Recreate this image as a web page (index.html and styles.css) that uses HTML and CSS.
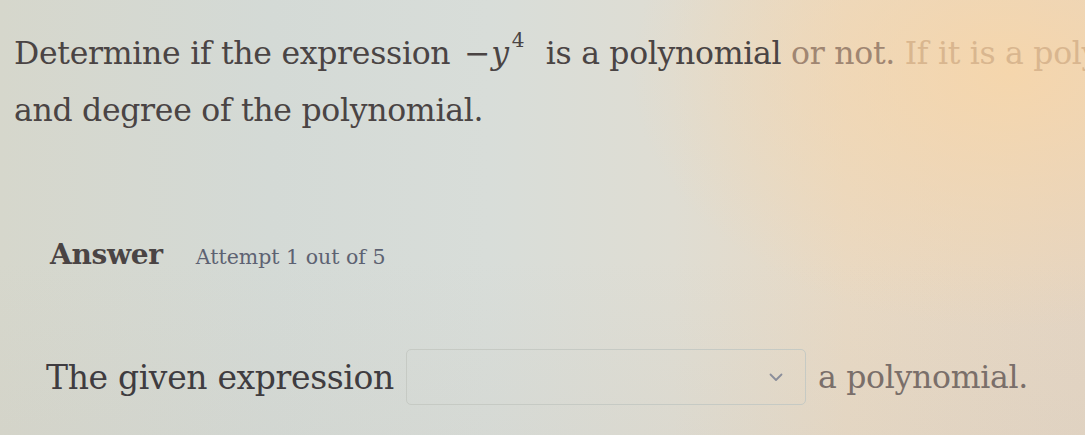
FILE: index.html
```html
<!DOCTYPE html>
<html>
<head>
<meta charset="utf-8">
<link rel="stylesheet" href="styles.css">
</head>
<body>
<div class="screen">
  <div class="glare"></div>
  <div class="page">
    <p class="question"><span class="q-dark">Determine if the expression <span class="math"><span class="minus">−</span><span class="var">y</span><sup class="exp">4</sup></span> is a polynomial</span> <span class="q-mid">or not.</span> <span class="q-light">If it is a polynomial, state the type</span><br><span class="q-dark">and degree of the polynomial.</span></p>
    <div class="answer-head">
      <span class="answer-label">Answer</span>
      <span class="attempt">Attempt 1 out of 5</span>
    </div>
    <div class="answer-row">
      <span class="lead">The given expression</span>
      <div class="select">
        <svg class="chev" width="14" height="9" viewBox="0 0 14 9"><path d="M1.5 1.5 L7 7 L12.5 1.5" fill="none" stroke="#8a8d9a" stroke-width="1.8" stroke-linecap="round" stroke-linejoin="round"/></svg>
      </div>
      <span class="tail">a polynomial.</span>
    </div>
  </div>
</div>
</body>
</html>
```
FILE: styles.css
```css
html, body {
  margin: 0;
  padding: 0;
  width: 1085px;
  height: 435px;
  overflow: hidden;
}
.screen {
  position: relative;
  width: 1085px;
  height: 435px;
  overflow: hidden;
  background:
    radial-gradient(ellipse 380px 260px at 1010px 70px, rgba(247, 214, 170, 0.9), rgba(240, 214, 180, 0) 100%),
    linear-gradient(90deg, #d6d7cc 0%, #d4dad6 25%, #d8ddd9 45%, #dfddd3 62%, #e8d9c4 78%, #e4d5c3 100%);
  font-family: "DejaVu Serif", Georgia, serif;
}
.glare {
  position: absolute;
  inset: 0;
  background: linear-gradient(180deg, rgba(255,255,255,0) 60%, rgba(200, 195, 185, 0.15) 100%);
  pointer-events: none;
}
.page {
  position: relative;
  padding-left: 14px;
}
.question {
  margin: 0;
  padding-top: 27px;
  font-size: 31.5px;
  line-height: 53px;
  white-space: nowrap;
  letter-spacing: -0.3px;
}
.q-dark { color: #4a4444; }
.q-mid { color: #a08672; }
.q-light { color: #d9b68f; }
.math { padding: 0 12px 0 4px; }
.minus { margin-right: 1px; }
.var { font-style: italic; }
.exp {
  font-size: 20px;
  vertical-align: 0;
  position: relative;
  top: -17px;
  margin-left: 3px;
}
.answer-head {
  display: flex;
  align-items: baseline;
  gap: 33px;
  padding-left: 36px;
  margin-top: 101px;
}
.answer-label {
  font-weight: bold;
  font-size: 28px;
  color: #4a4444;
  letter-spacing: -0.3px;
}
.attempt {
  font-size: 20.5px;
  color: #5d6272;
}
.answer-row {
  display: flex;
  align-items: center;
  padding-left: 32px;
  margin-top: 78px;
}
.lead {
  font-size: 33px;
  color: #3f3c40;
  letter-spacing: -0.35px;
}
.select {
  margin-left: 12px;
  width: 400px;
  height: 56px;
  border: 1px solid #c6cac4;
  border-radius: 5px;
  display: flex;
  align-items: center;
  justify-content: flex-end;
  padding-right: 22px;
  box-sizing: border-box;
}
.tail {
  margin-left: 12px;
  font-size: 31.5px;
  color: #7a6f6a;
  letter-spacing: -0.3px;
}
```
